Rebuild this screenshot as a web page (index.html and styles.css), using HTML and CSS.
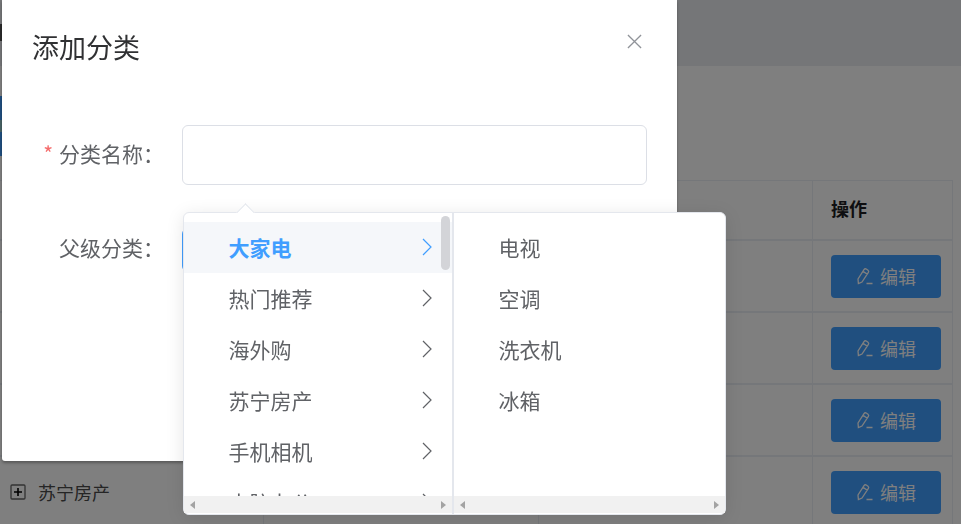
FILE: index.html
```html
<!DOCTYPE html>
<html lang="zh-CN">
<head>
<meta charset="utf-8">
<title>添加分类</title>
<link rel="stylesheet" href="styles.css">
</head>
<body>
<div class="page">
  <header class="topbar"></header>
  <span class="side-glyph"></span>
  <aside class="side-tab"><span class="side-icon"></span></aside>
  <section class="table-wrap">
    <div class="row head">
      <div class="cell c1"></div><div class="cell c2"></div><div class="cell c3"></div>
      <div class="cell c4 strong">操作</div>
    </div>
    <div class="row">
      <div class="cell c1"></div><div class="cell c2"></div><div class="cell c3"></div>
      <div class="cell c4"><button class="edit"><svg class="pen" viewBox="0 0 18 18"><path d="M2 12 8 2.7Q9 1.2 10.6 2.2L12 3.2Q13.2 4.2 12.4 5.4L6 15 2.4 16.6zM7 4.4l4.4 2.9M10.5 16.5h6"/></svg>编辑</button></div>
    </div>
    <div class="row">
      <div class="cell c1"></div><div class="cell c2"></div><div class="cell c3"></div>
      <div class="cell c4"><button class="edit"><svg class="pen" viewBox="0 0 18 18"><path d="M2 12 8 2.7Q9 1.2 10.6 2.2L12 3.2Q13.2 4.2 12.4 5.4L6 15 2.4 16.6zM7 4.4l4.4 2.9M10.5 16.5h6"/></svg>编辑</button></div>
    </div>
    <div class="row">
      <div class="cell c1"></div><div class="cell c2"></div><div class="cell c3"></div>
      <div class="cell c4"><button class="edit"><svg class="pen" viewBox="0 0 18 18"><path d="M2 12 8 2.7Q9 1.2 10.6 2.2L12 3.2Q13.2 4.2 12.4 5.4L6 15 2.4 16.6zM7 4.4l4.4 2.9M10.5 16.5h6"/></svg>编辑</button></div>
    </div>
    <div class="row">
      <div class="cell c1 named"><svg class="expand" viewBox="0 0 16 16"><rect x="1" y="1" width="14" height="14" rx="1"/><path class="plus" d="M4 8h8M8 4v8"/></svg>苏宁房产</div><div class="cell c2"></div><div class="cell c3"></div>
      <div class="cell c4"><button class="edit"><svg class="pen" viewBox="0 0 18 18"><path d="M2 12 8 2.7Q9 1.2 10.6 2.2L12 3.2Q13.2 4.2 12.4 5.4L6 15 2.4 16.6zM7 4.4l4.4 2.9M10.5 16.5h6"/></svg>编辑</button></div>
    </div>
  </section>
</div>
<div class="mask"></div>
<div class="dialog">
  <div class="dialog-head">
    <span class="dialog-title">添加分类</span>
    <svg class="close" viewBox="0 0 16 16"><path d="M1 1l14 14M15 1 1 15"/></svg>
  </div>
  <div class="form-row">
    <label class="form-label"><span class="star">*</span>分类名称：</label>
    <div class="input"></div>
  </div>
  <div class="form-row second">
    <label class="form-label">父级分类：</label>
    <div class="input focus"></div>
  </div>
</div>
<div class="popover">
  <span class="arrow"></span>
  <div class="menu first">
    <ul class="list">
      <li class="item active">大家电<svg class="chev" viewBox="0 0 10 18"><path d="M1 1l8 8-8 8"/></svg></li>
      <li class="item">热门推荐<svg class="chev" viewBox="0 0 10 18"><path d="M1 1l8 8-8 8"/></svg></li>
      <li class="item">海外购<svg class="chev" viewBox="0 0 10 18"><path d="M1 1l8 8-8 8"/></svg></li>
      <li class="item">苏宁房产<svg class="chev" viewBox="0 0 10 18"><path d="M1 1l8 8-8 8"/></svg></li>
      <li class="item">手机相机<svg class="chev" viewBox="0 0 10 18"><path d="M1 1l8 8-8 8"/></svg></li>
      <li class="item">电脑办公<svg class="chev" viewBox="0 0 10 18"><path d="M1 1l8 8-8 8"/></svg></li>
    </ul>
    <span class="thumb"></span>
    <div class="hbar"><i class="tri left"></i><i class="tri right"></i></div>
  </div>
  <div class="menu second-menu">
    <ul class="list">
      <li class="item">电视</li>
      <li class="item">空调</li>
      <li class="item">洗衣机</li>
      <li class="item">冰箱</li>
    </ul>
    <div class="hbar"><i class="tri left"></i><i class="tri right"></i></div>
  </div>
</div>
</body>
</html>
```
FILE: styles.css
```css
* { box-sizing: border-box; }
html, body { margin: 0; height: 100%; overflow: hidden; }
body { font-family: "Noto Sans CJK SC", "Liberation Sans", sans-serif; background: #fff; }
ul { list-style: none; margin: 0; padding: 0; }
.page { height: 524px; overflow: hidden; position: relative; }
.topbar { height: 66px; background: #eaecf0; }
.side-glyph { position: absolute; left: 0; top: 24px; width: 2px; height: 17px; background: #555; }
.side-tab { position: absolute; left: 0; top: 96px; width: 2px; height: 60px; background: #409eff; }
.side-icon { position: absolute; left: 0; top: 24px; width: 2px; height: 12px; background: #8fc4c8; }
.table-wrap { margin: 114px 0 0 0; width: 953px; border-right: 1px solid #ebeef5; border-top: 1px solid #ebeef5; }
.row { display: flex; height: 72px; border-bottom: 2px solid #ebeef5; }
.row.head { height: 60px; background: #fff; }
.cell { border-right: 1px solid #ebeef5; display: flex; align-items: center; font-size: 18px; color: #606266; }
.cell:last-child { border-right: 0; }
.c1 { width: 264px; }
.c2 { width: 275px; }
.c3 { width: 274px; }
.c4 { flex: 1; padding-left: 18px; }
.strong { font-weight: 700; color: #1c1c22; padding-bottom: 4px; }
.named { padding-left: 10px; color: #4a4a4a; }
.expand { width: 16px; height: 16px; margin-right: 12px; fill: none; stroke: #666; stroke-width: 1.3; }
.plus { stroke: #000; stroke-width: 1.6; }
.edit { display: flex; align-items: center; justify-content: center; width: 110px; height: 43px; border: 0; border-radius: 4px; background: #409eff; color: #fff; font: inherit; font-size: 18px; padding: 0; }
.pen { width: 18px; height: 18px; margin-right: 6px; fill: none; stroke: #fff; stroke-width: 1.3; }
.mask { position: fixed; inset: 0; background: rgba(0, 0, 0, .5); }
.dialog { position: absolute; left: 2px; top: 0; width: 675px; height: 461px; background: #fff; border-radius: 0 0 3px 3px; box-shadow: 0 2px 3px rgba(0,0,0,.3); }
.dialog-head { display: flex; justify-content: space-between; align-items: flex-start; padding: 27px 35px 0 30px; height: 125px; }
.dialog-title { font-size: 27px; line-height: 40px; color: #303133; }
.close { width: 15px; height: 15px; margin-top: 7px; fill: none; stroke: #909399; stroke-width: 1.4; }
.form-row { display: flex; align-items: center; height: 60px; }
.form-row.second { margin-top: 34px; }
.form-label { width: 180px; padding: 0 18px 4px 0; text-align: right; font-size: 21px; color: #606266; white-space: nowrap; }
.star { color: #f56c6c; margin-right: 6px; }
.input { width: 465px; height: 60px; border: 1.5px solid #dcdfe6; border-radius: 6px; background: #fff; }
.input.focus { height: 44px; margin-top: 1px; border-color: #409eff; }
.popover { position: absolute; left: 183px; top: 212px; width: 543px; height: 303px; display: flex; background: #fff; border: 1px solid #e4e7ed; border-radius: 6px; box-shadow: 0 3px 18px rgba(0,0,0,.1); }
.arrow { position: absolute; left: 55px; top: -7px; width: 13px; height: 13px; background: #fff; border-left: 1px solid #e4e7ed; border-top: 1px solid #e4e7ed; transform: rotate(45deg); }
.menu { position: relative; width: 270px; height: 100%; overflow: hidden; border-right: 2px solid #e4e7ed; }
.second-menu { flex: 1; border-right: 0; }
.list { height: 284px; overflow: hidden; padding-top: 9px; }
.item { display: flex; align-items: center; justify-content: space-between; height: 51px; padding: 0 20px 2px 44.6px; font-size: 21px; color: #606266; }
.item.active { background: #f5f7fa; color: #409eff; font-weight: 700; }
.chev { width: 10px; height: 18px; fill: none; stroke: #606266; stroke-width: 1.2; }
.active .chev { stroke: #409eff; }
.thumb { position: absolute; left: 257px; top: 3px; width: 9px; height: 54px; border-radius: 5px; background: #d3d4d8; }
.hbar { position: absolute; left: 0; right: 0; bottom: 1px; height: 17px; background: #f1f1f1; display: flex; align-items: center; justify-content: space-between; padding: 0 6px; }
.tri { width: 0; height: 0; border-top: 4px solid transparent; border-bottom: 4px solid transparent; }
.tri.left { border-right: 5px solid #a3a3a3; }
.tri.right { border-left: 5px solid #a3a3a3; }
```
